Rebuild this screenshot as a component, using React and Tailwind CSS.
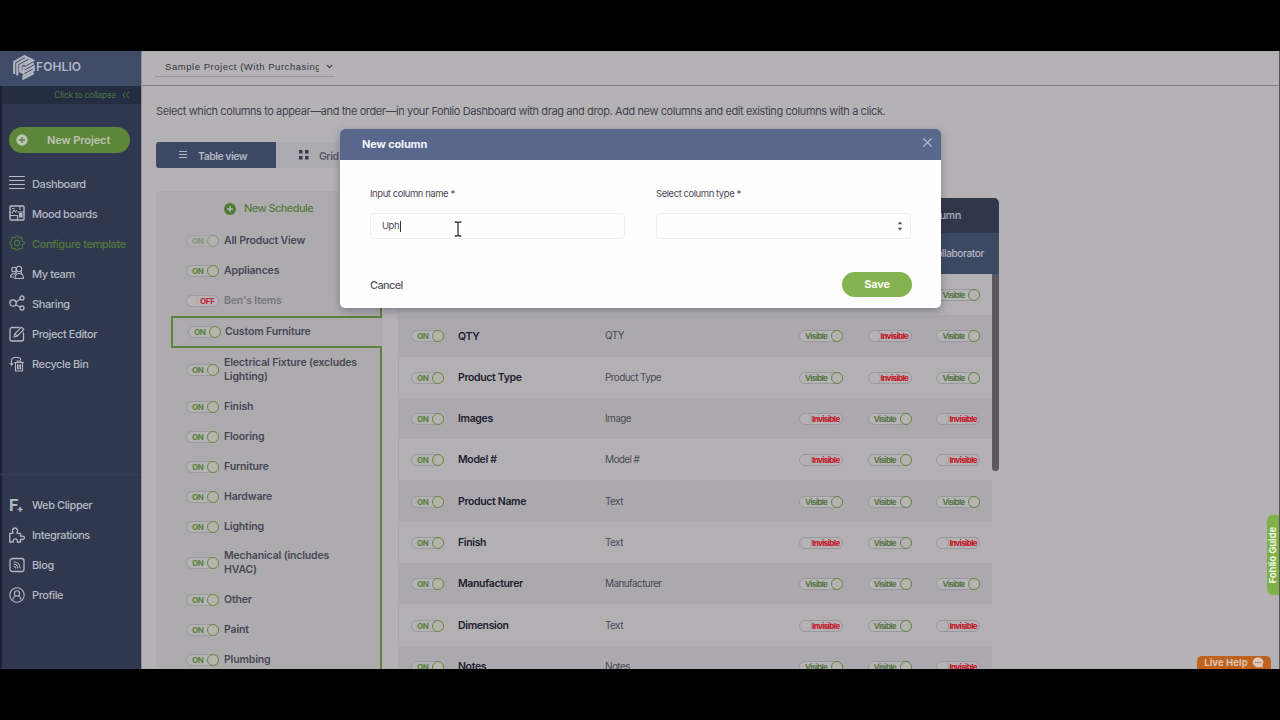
import React from "react";
import { ChevronDown, X } from "lucide-react";

const schedulesAbove = [
  { name: "All Product View", state: "faded" },
  { name: "Appliances", state: "on" },
  { name: "Ben's Items", state: "off" },
];

const schedulesBelow = [
  { name: "Electrical Fixture (excludes Lighting)", tall: true },
  { name: "Finish" },
  { name: "Flooring" },
  { name: "Furniture" },
  { name: "Hardware" },
  { name: "Lighting" },
  { name: "Mechanical (includes HVAC)", tall: true },
  { name: "Other" },
  { name: "Paint" },
  { name: "Plumbing" },
];

const columns = [
  ["Item", "Text", 1, 1, 1],
  ["QTY", "QTY", 1, 0, 1],
  ["Product Type", "Product Type", 1, 0, 1],
  ["Images", "Image", 0, 1, 0],
  ["Model #", "Model #", 0, 1, 0],
  ["Product Name", "Text", 1, 1, 1],
  ["Finish", "Text", 0, 1, 0],
  ["Manufacturer", "Manufacturer", 1, 1, 1],
  ["Dimension", "Text", 0, 1, 0],
  ["Notes", "Notes", 1, 1, 0],
];

function Icon({ children }) {
  return (
    <svg
      width="16"
      height="16"
      viewBox="0 0 16 16"
      fill="none"
      stroke="currentColor"
      strokeWidth="1.1"
      strokeLinecap="round"
      strokeLinejoin="round"
      className="shrink-0"
    >
      {children}
    </svg>
  );
}

const icons = {
  dashboard: (
    <Icon>
      <path d="M.5 1.500h15M.5 5.500h15M.5 9.500h15M.5 13.500h15" />
    </Icon>
  ),
  mood: (
    <Icon>
      <rect x="1" y="1" width="14" height="14" rx="1" strokeWidth="1.400" />
      <path d="M1 10.500h7.500V15M3 8l2-3 1.500 2 1-1.300M8.500 7H15M11 1v3.500" />
      <rect x="10.500" y="8.500" width="2.500" height="3.500" fill="currentColor" />
      <path d="M3.500 3.500h1.500" />
    </Icon>
  ),
  gear: (
    <Icon>
      <path d="M8 .7c1 0 1.300.4 1.500 1.200.2.700 1 1 1.700.7.800-.4 1.300-.3 1.900.3s.7 1.100.3 1.900c-.3.700 0 1.500.7 1.700.8.200 1.200.5 1.200 1.500s-.4 1.300-1.200 1.500c-.7.200-1 1-.7 1.700.4.800.3 1.300-.3 1.900s-1.100.7-1.900.3c-.7-.3-1.500 0-1.700.7-.2.800-.5 1.200-1.500 1.200s-1.300-.4-1.500-1.200c-.2-.7-1-1-1.700-.7-.8.4-1.300.3-1.900-.3s-.7-1.100-.3-1.900c.3-.7 0-1.500-.7-1.700C1.100 9.300.7 9 .7 8s.4-1.300 1.200-1.500c.7-.2 1-1 .7-1.700-.4-.8-.3-1.300.3-1.900s1.100-.7 1.900-.3c.7.300 1.500 0 1.700-.7C6.700 1.100 7 .7 8 .7z" />
      <circle cx="8" cy="8" r="2.600" />
    </Icon>
  ),
  team: (
    <Icon>
      <circle cx="5" cy="4.500" r="2.300" />
      <circle cx="10" cy="4" r="2.700" />
      <path d="M4.500 8.500C2.500 9 1.500 10 1.500 12h3M6 13.500c0-3.500 1.500-5 4-5s4.500 1.500 4.500 5zM7.500 6.800 5.500 9.500M12 6.500l1 3" />
    </Icon>
  ),
  share: (
    <Icon>
      <circle cx="4" cy="8" r="3.200" strokeWidth="1.300" />
      <circle cx="13" cy="3" r="2" strokeWidth="1.300" />
      <circle cx="13" cy="13" r="2" strokeWidth="1.300" />
      <path d="m7 7 4.300-3M7 10l4.300 2" />
    </Icon>
  ),
  edit: (
    <Icon>
      <path d="M10 1.500H3a2 2 0 0 0-2 2V13a2 2 0 0 0 2 2h9.500a2 2 0 0 0 2-2V7" strokeWidth="1.300" />
      <path d="m5 11 .8-3.200L12.500 1.200l2.300 2.300L8.200 10.200zM6 8l2.200 2" />
    </Icon>
  ),
  bin: (
    <Icon>
      <path d="M5.500 6.500h9M6.500 6.500V15h7V6.500M8.500 8.500v4.500M10 8.500v4.500M11.500 8.500v4.500M8 6.500v-1.500h4v1.500" />
      <path d="M2.500 9V4.500C2.500 2.500 4 1.500 6 1.500h3c1.500 0 2.500.8 2.500 2M1 7.500 2.500 9.200 4 7.500" />
    </Icon>
  ),
  puzzle: (
    <Icon>
      <path
        strokeWidth="1.300"
        d="M.8 15V6.300h2.700c.8 0 .6-.7.3-1.200C2.900 3.300 4 1 6 1s3.100 2.300 2.200 4.100c-.3.500-.5 1.200.3 1.200h3v2.500c0 .8.600.8 1.100.5 1.500-.6 2.800.3 2.800 1.500s-1.300 2.100-2.800 1.500c-.5-.3-1.100-.3-1.100.5V15H8.300v-1.300C8.300 12.500 7.400 11.800 6.300 11.800s-2 .7-2 1.900V15z"
      />
    </Icon>
  ),
  blog: (
    <Icon>
      <rect x="1" y="1.500" width="14" height="13" rx="2.500" strokeWidth="1.300" />
      <path d="M5 5c3.500 0 6 2.500 6 6M5 7.300c2.200 0 3.700 1.500 3.700 3.700M5 9.500c.9 0 1.500.6 1.500 1.500" />
    </Icon>
  ),
  profile: (
    <Icon>
      <circle cx="8" cy="8" r="7.200" />
      <circle cx="8" cy="6.400" r="2.600" />
      <path d="M4 12.300c.3-1.800 1.200-3 2.500-3.500M12 12.300c-.3-1.800-1.200-3-2.500-3.500" />
    </Icon>
  ),
};

function NavItem({ icon, active, children }) {
  return (
    <li
      className={`flex h-[30.100px] items-center gap-[7px] pl-[9px] text-[11px] font-medium tracking-[-0.400px] whitespace-nowrap ${
        active ? "text-[#517a3b]" : "text-[#b6b8c3]"
      }`}
    >
      {icon}
      <span className="pt-[1.500px]">{children}</span>
    </li>
  );
}

function PlusBadge({ className = "" }) {
  return (
    <svg width="12" height="12" viewBox="0 0 12 12" className={`shrink-0 ${className}`}>
      <circle cx="6" cy="6" r="6" fill="currentColor" />
      <path d="M6 3v6M3 6h6" strokeWidth="1.500" className="stroke-[#b5b3b6]" />
    </svg>
  );
}

function Logo() {
  return (
    <svg width="22" height="25" viewBox="0 0 22 25" fill="none" stroke="#b4b6c2" strokeWidth="2.100" className="shrink-0">
      <path d="M1.200 19V6.800L11.500 1.200l8.500 4.300-8.500 4.600" />
      <path d="M4.300 20.500V8.600L14.500 3M7.400 17V10.300L17 5.200" />
      <path d="M7.400 10.300v6.200l3 1.600V11.500M20.800 8.300 10.500 13.800v3.500l10.300-5.500v3.500L10.500 20.800v2.700l10.300-5.500" />
    </svg>
  );
}

function OnOff({ state = "on" }) {
  if (state === "off") {
    return (
      <span className="flex h-[12px] w-[33px] shrink-0 items-center rounded-full border border-[#9c9a9f] bg-[#b7b4b8]">
        <span className="h-[10px] w-[11px] shrink-0 rounded-r-full border-r border-[#c49ca4]" />
        <span className="ml-[2px] text-[8px] leading-none font-bold tracking-[-0.300px] text-[#c0202d]">OFF</span>
      </span>
    );
  }
  return (
    <span
      className={`flex h-[12px] w-[33px] shrink-0 items-center justify-between rounded-full border border-[#9b9a9e] bg-[#b4b3b4] pl-[5px] ${
        state === "faded" ? "opacity-50" : ""
      }`}
    >
      <span className="text-[8px] leading-none font-bold tracking-[-0.300px] text-[#58803a]">ON</span>
      <span className="-mr-px size-[12px] shrink-0 rounded-full border border-[#66883f] bg-[#b5b5ae]" />
    </span>
  );
}

function Visibility({ on }) {
  return on ? (
    <span className="flex h-[12px] w-[44px] items-center justify-between rounded-full border border-[#99989d] bg-[#b5b4b6] pl-[5px]">
      <span className="text-[8px] leading-none font-bold tracking-[-0.650px] text-[#567545]">Visible</span>
      <span className="-mr-px size-[12px] shrink-0 rounded-full border border-[#66823f] bg-[#b5b4b2]" />
    </span>
  ) : (
    <span className="flex h-[12px] w-[44px] items-center rounded-full border border-[#99989d] bg-[#b5b2b6]">
      <span className="size-[12px] shrink-0 rounded-full border-r border-[#99989d]" />
      <span className="text-[8px] leading-none font-extrabold tracking-[-0.650px] text-[#c2222e]">Invisible</span>
    </span>
  );
}

function Sidebar() {
  return (
    <aside className="flex w-[142px] shrink-0 flex-col border-r border-l-2 border-r-[#8e8d97] border-l-[#1c2136] bg-[#30384f]">
      <div className="-ml-[2px] flex h-[35px] items-center bg-[#404b68] pb-[3px] pl-[13px]">
        <Logo />
        <span className="ml-px text-[12px] font-semibold tracking-[0.100px] text-[#b4b6c2]">FOHLIO</span>
      </div>
      <div className="flex h-[18px] items-center justify-end gap-[6px] bg-[#252d43] pr-[11px] text-[8.500px] tracking-[-0.250px] text-[#4c7340]">
        <span>Click to collapse</span>
        <svg width="8" height="8" viewBox="0 0 8 8" fill="none" stroke="currentColor" strokeWidth="1">
          <path d="M3.700.8.800 4l2.900 3.200M7.200.8 4.300 4l2.900 3.200" />
        </svg>
      </div>
      <div className="pt-[23px] pl-[7px]">
        <button className="flex h-[26px] w-[121px] items-center rounded-full bg-[#5e8639] pl-[7px] text-[11px] font-semibold tracking-[-0.100px] text-[#bcc4b6]">
          <svg width="12" height="12" viewBox="0 0 12 12">
            <circle cx="6" cy="6" r="5.700" fill="#bcc4b6" />
            <path d="M6 3v6M3 6h6" stroke="#5e8639" strokeWidth="1.400" />
          </svg>
          <span className="ml-[19px] pt-px">New Project</span>
        </button>
      </div>
      <ul className="-ml-[2px] pt-[15px]">
        <NavItem icon={icons.dashboard}>Dashboard</NavItem>
        <NavItem icon={icons.mood}>Mood boards</NavItem>
        <NavItem icon={icons.gear} active>Configure template</NavItem>
        <NavItem icon={icons.team}>My team</NavItem>
        <NavItem icon={icons.share}>Sharing</NavItem>
        <NavItem icon={icons.edit}>Project Editor</NavItem>
        <NavItem icon={icons.bin}>Recycle Bin</NavItem>
      </ul>
      <ul className="mt-[95px] -ml-[2px] border-t border-[#363e55] pt-[15px]">
        <NavItem
          icon={
            <span className="flex w-4 items-end text-[16px] leading-[16px] font-bold">
              F<b className="-ml-px text-[9px] leading-[8px]">+</b>
            </span>
          }
        >
          Web Clipper
        </NavItem>
        <NavItem icon={icons.puzzle}>Integrations</NavItem>
        <NavItem icon={icons.blog}>Blog</NavItem>
        <NavItem icon={icons.profile}>Profile</NavItem>
      </ul>
    </aside>
  );
}

function Schedules() {
  return (
    <section className="flex w-[226px] shrink-0 flex-col rounded-t-[4px] bg-[#aeabaf] text-[10.500px] font-semibold tracking-[-0.150px] text-[#474756]">
      <div className="h-[125px] border-r-2 border-[#5d843c]">
        <div className="flex h-[35px] items-center gap-[8px] pl-[68px] text-[11px] font-medium tracking-[-0.550px] text-[#577b3e]">
          <PlusBadge className="text-[#4f7d33]" />
          New Schedule
        </div>
        {schedulesAbove.map((s) => (
          <div key={s.name} className="flex h-[30px] items-center gap-[5px] pl-[30px]">
            <OnOff state={s.state} />
            <span className={s.state === "off" ? "text-[#77757e]" : ""}>{s.name}</span>
          </div>
        ))}
      </div>
      <div className="ml-[15px] flex h-[32px] items-center gap-[4px] border-y-2 border-l-2 border-[#5d843c] pl-[15px]">
        <OnOff />
        <span>Custom Furniture</span>
      </div>
      <div className="grow border-r-2 border-[#5d843c]">
        {schedulesBelow.map((s) => (
          <div
            key={s.name}
            className={`flex items-center gap-[5px] pl-[30px] leading-[14px] ${s.tall ? "h-[43.500px]" : "h-[30px]"}`}
          >
            <OnOff />
            <span className="w-[138px]">{s.name}</span>
          </div>
        ))}
      </div>
    </section>
  );
}

function ColumnsTable() {
  return (
    <section className="mt-[7px] flex w-[601px] flex-col overflow-hidden rounded-t-[5px]">
      <div className="flex h-[35px] shrink-0 items-center justify-end bg-[#31374b] pr-[38px] text-[10.500px] font-medium tracking-[-0.200px] text-[#b6b7c1]">
        New column
      </div>
      <div className="flex h-[41px] shrink-0 items-center justify-end bg-[#3d4863] pr-[15px] text-[10px] font-medium tracking-[-0.350px] text-[#b6b7c1]">
        Collaborator
      </div>
      <div className="flex">
        <div className="w-[594px] border-l border-[#a8a6aa]">
          {columns.map(([name, type, a, b, c], i) => (
            <div
              key={name}
              className={`flex h-[41.300px] items-center pl-[12px] ${i % 2 ? "bg-[#aba9ae]" : "bg-[#b3b0b4]"}`}
            >
              <span className="flex pt-px">
                <OnOff />
              </span>
              <span className="ml-[14px] w-[147px] pt-px text-[10.500px] font-semibold tracking-[-0.350px] text-[#20202f]">{name}</span>
              <span className="w-[194px] text-[10px] tracking-[-0.600px] text-[#4b4a54]">{type}</span>
              <span className="flex gap-[24.700px] pt-px">
                <Visibility on={a} />
                <Visibility on={b} />
                <Visibility on={c} />
              </span>
            </div>
          ))}
        </div>
        <div className="h-[197px] w-[7px] rounded-b-full bg-[#5b595d]" />
      </div>
    </section>
  );
}

function Modal() {
  return (
    <div className="absolute top-[78px] left-[340px] h-[179px] w-[601px] overflow-hidden rounded-[5px] bg-[#fefefe] shadow-[0_3px_9px_rgba(40,40,50,0.35)]">
      <div className="flex h-[31px] items-center justify-between bg-[#5a678c] pr-[6px] pl-[22px]">
        <h2 className="text-[11px] font-bold tracking-[-0.150px] text-[#f1f3f9]">New column</h2>
        <X size={15} strokeWidth={1.800} className="mb-[4px] text-[#b6bfd8]" />
      </div>
      <div className="grid grid-cols-2 gap-x-[31px] px-[30px] pt-[27px] text-[9.500px] tracking-[-0.450px] text-[#4c4a5c]">
        <label className="flex h-[26px] items-start leading-[14px]">Input column name *</label>
        <label className="flex h-[26px] items-start leading-[14px]">Select column type *</label>
        <div className="flex h-[26px] items-center rounded-[4px] border border-[#f0eef2] pl-[11px]">
          <span className="text-[9.500px] tracking-[-0.500px] text-[#4b4b58]">Uph</span>
          <span className="ml-[0.500px] h-[11px] w-px bg-[#333]" />
        </div>
        <div className="flex h-[26px] items-center justify-end rounded-[4px] border border-[#f0eef2] pr-[7px]">
          <svg width="6" height="10" viewBox="0 0 6 10" fill="#4d4b55">
            <path d="M3 .5 5.200 3.300H.8zM3 9.500 5.200 6.700H.8z" />
          </svg>
        </div>
      </div>
      <div className="flex items-center justify-between pt-[33px] pr-[29px] pl-[30px]">
        <span className="pt-px text-[11px] font-medium tracking-[-0.650px] text-[#5a5868]">Cancel</span>
        <button className="h-[25px] w-[70px] rounded-full bg-[#86b352] text-[11px] font-bold tracking-[-0.200px] text-[#f6faee]">Save</button>
      </div>
      <svg width="8" height="16" viewBox="0 0 8 16" fill="none" stroke="#33313a" strokeWidth="1.300" className="absolute top-[92px] left-[114px]">
        <path d="M.8 1h2L4 2l1.200-1h2M4 2v12M.8 15h2L4 14l1.200 1h2" />
      </svg>
    </div>
  );
}

export default function App() {
  return (
    <div className="h-[720px] w-[1280px] overflow-hidden bg-black py-[51px] font-[Inter,'Liberation_Sans',sans-serif]">
      <div className="relative flex h-[618px] overflow-hidden border-r border-[#55525c] bg-[#b5b2b6]">
        <Sidebar />
        <main className="flex min-w-0 grow flex-col">
          <header className="flex h-[35px] shrink-0 items-start border-b border-[#858388] pl-[13px]">
            <div className="mt-[6px] flex h-[20px] w-[180px] items-center justify-between border-b border-[#96949a] pr-px pl-[10px] font-['Liberation_Sans',Arial,sans-serif] text-[9.500px] tracking-[0.540px] text-[#34333b]">
              <span className="w-[154px] overflow-hidden pt-px whitespace-nowrap">Sample Project (With Purchasing)</span>
              <ChevronDown size={9} strokeWidth={3} />
            </div>
          </header>
          <p className="mt-[17px] pl-[14px] text-[11px] leading-[17px] tracking-[-0.405px] whitespace-nowrap text-[#44434d]">
            Select which columns to appear—and the order—in your Fohlio Dashboard with drag and drop. Add new columns and edit existing columns with a click.
          </p>
          <div className="mt-[22px] ml-[14px] flex h-[26px] shrink-0 text-[10.500px] font-semibold tracking-[-0.500px]">
            <div className="flex w-[120px] items-center gap-[11px] rounded-l-[3px] bg-[#3d4964] pl-[23px] text-[#b3b6c2]">
              <svg width="8" height="9" viewBox="0 0 8 9" stroke="currentColor" strokeWidth="1">
                <path d="M0 .5h8M0 3.500h8M0 6.500h8" />
              </svg>
              <span className="pt-[3px]">Table view</span>
            </div>
            <div className="flex w-[120px] items-center gap-[10px] rounded-r-[3px] bg-[#adabb2] pl-[23px] text-[#55535f]">
              <svg width="10" height="10" viewBox="0 0 10 10" className="fill-[#3c3b49]">
                <path d="M0 0h3.500v3.500H0zM6 0h3.500v3.500H6zM0 6h3.500v3.500H0zM6 6h3.500v3.500H6z" />
              </svg>
              <span className="pt-[3px]">Grid view</span>
            </div>
          </div>
          <div className="mt-[23px] ml-[14px] flex grow items-stretch gap-[16px]">
            <Schedules />
            <ColumnsTable />
          </div>
        </main>
        <Modal />
        <div className="absolute top-[464px] right-0 flex h-[80px] w-[12px] items-center justify-center rounded-l-[6px] bg-[#7fb04a]">
          <span className="rotate-180 text-[9.500px] leading-[10px] font-bold tracking-[-0.100px] whitespace-nowrap text-[#eef6e2] [writing-mode:vertical-rl]">Fohlio Guide</span>
        </div>
        <div className="absolute right-[8px] bottom-0 flex h-[13px] w-[74px] items-center justify-center gap-[4px] rounded-t-[5px] bg-[#bf621d] text-[9.500px] font-bold whitespace-nowrap text-[#dcc5b5]">
          <span className="pt-px tracking-[0.100px]">Live Help</span>
          <svg width="12" height="11" viewBox="0 0 12 11">
            <path d="M6 .3a5.500 5 0 1 0 2.600 9.500l2.400.9-.6-2.500A5 5 0 0 0 6 .3z" fill="#dcc9bd" />
            <path d="M3 5.500h1.500M5.300 5.500h1.500M7.600 5.500h1.500" stroke="#a8693f" />
          </svg>
        </div>
      </div>
    </div>
  );
}
